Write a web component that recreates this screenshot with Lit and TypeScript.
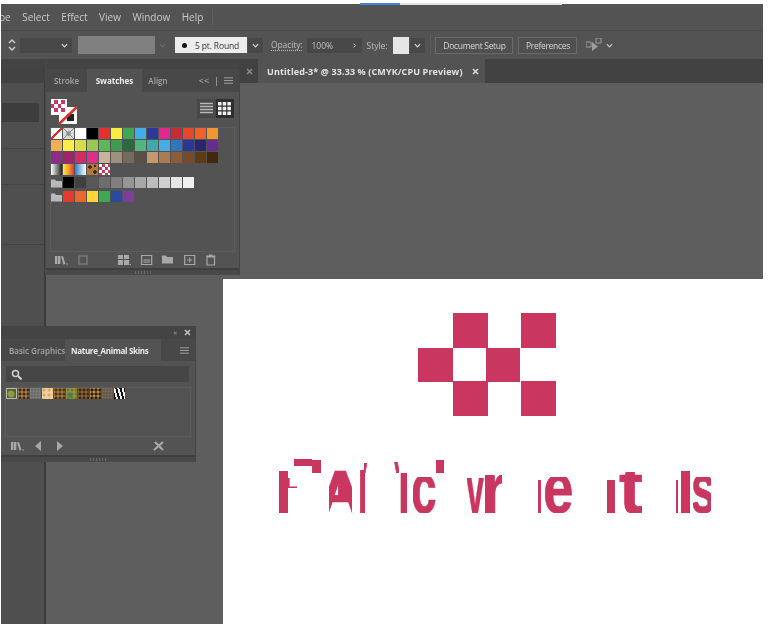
import { LitElement, html, css, svg } from "lit";
import { customElement } from "lit/decorators.js";

const ROW1 = ["none","reg","#ffffff","#000000","#e4322b","#f7ec3f","#3fa655","#43ade8","#2b3a9a","#e0298f","#c22c3b","#e5472f","#f0622b","#f2972f"];
const ROW2 = ["#f4b050","#fbee4b","#d8dc4b","#9cc653","#5cb85c","#3f9a52","#296a41","#52b47e","#41a7a7","#45ade6","#2d77c2","#2a3797","#2a2472","#652d90"];
const ROW3 = ["#8e2a90","#a0236e","#d22a6b","#de2c8f","#c4b49c","#a0907f","#756a5e","#5b4e45","#c49a6c","#a97c50","#8a5d3b","#754c29","#5f3a17","#42280e"];
const ROW4 = ["g-bw","g-yr","g-bl","leo","chk"];
const ROW5 = ["folder","#000000","#404040","#585858","#6d6d6d","#808080","#959595","#a8a8a8","#bdbdbd","#d0d0d0","#e6e6e6","#f1f1f1"];
const ROW6 = ["folder","#e53a2f","#e9672e","#fcd63a","#3fa655","#2a4a9e","#7c3f98"];
const SKINS = ["s1","s2","s3","s4","s5","s6","s7","s8","s9","s10"];

// [char, glyph x, baseline y, size, box left, top, right, bottom, horizontal scale]
const PIECES: [string, number, number, number, number, number, number, number, number?][] = [
  ["F",274,513,72,279,471,288,513],
  ["F",274,513,72,288,478,297,488],
  ["—",280,482,72,294,459,312,466],
  ["l",307,513,72,312,460,321,473],
  ["A",318,513,62,329,470,352,513],
  ["l",334,513,62,338,476,347,496],
  ["l",356,513,62,360,470,365,513],
  ["/",362,473,24,364,463,372,473],
  ["\\",393,473,24,394,462,399,473],
  ["l",396,513,72,400,473,407,513],
  ["c",411,513,72,413,477,436,513,0.64],
  ["l",431,513,72,436,460,444,473],
  ["v",466,513,72,467,478,484,513,0.46],
  ["r",480,513,72,485,475,502,513],
  ["l",533,513,72,538,480,541,513],
  ["e",543,513,72,545,477,574,513,0.76],
  ["l",602,513,72,607,480,615,513],
  ["t",619,513,72,617,472,642,513],
  ["l",671,513,72,676,480,678,513],
  ["l",676,513,72,681,471,690,513],
  ["s",691,513,72,693,477,711,513,0.6],
];

const chev = html`<svg class="chev" viewBox="0 0 8 5"><path d="M1 1l3 3 3-3" fill="none" stroke="currentColor" stroke-width="1.4"/></svg>`;
const x = html`<svg class="x" viewBox="0 0 7 7"><path d="M1 1l5 5M6 1L1 6" stroke="currentColor" stroke-width="1.5"/></svg>`;
const burger = html`<svg class="burger" viewBox="0 0 10 7"><path d="M0 .5h10M0 3.5h10M0 6.5h10" stroke="currentColor"/></svg>`;
const libs = svg`<path d="M1 2h2.400v8H1zM4 2h2.400v8H4zM7 2.400l2-.5 2.400 8.100-2 .5z" fill="currentColor"/><path d="M12.500 9.500h1.500v1h-1.500z" fill="currentColor"/>`;
const folderIcon = svg`<path d="M0 1.500h4l1 1.500h6v6.500H0z" fill="currentColor"/>`;

@customElement("app-root")
export class AppRoot extends LitElement {
  static styles = css`
    :host { display: block; position: relative; width: 768px; height: 627px; background: #fff; overflow: hidden; font-family: "Open Sans", "Noto Sans", sans-serif; }
    .topline { position: absolute; z-index: 1; left: 360px; top: 3px; width: 202px; height: 2px; background: linear-gradient(to right, #3f86d8 40px, #e4e4e4 40px); }
    .app { position: absolute; left: 1px; top: 4px; width: 762px; height: 620px; background: #5e5e5e; display: flex; flex-direction: column; filter: blur(0.45px); color: #c4c4c4; overflow: hidden; }

    .menubar { height: 26px; display: flex; align-items: center; background: #535353; font-size: 10px; color: #c9c9c9; border-bottom: 1px solid #4a4a4a; flex: none; overflow: hidden; }
    .menubar .items { display: flex; gap: 11.500px; margin-left: -2px; padding-right: 9px; border-right: 1px solid #5f5f5f; height: 16px; align-items: center; }
    .options { height: 28px; display: flex; align-items: center; background: #535353; font-size: 8.500px; flex: none; padding-left: 5px; }
    .stepper { width: 12px; height: 16px; color: #d0d0d0; flex: none; }
    .field { height: 15px; background: #484848; display: flex; align-items: center; flex: none; }
    .f1 { width: 37px; margin-left: 2px; }
    .chevbox { width: 15px; height: 15px; background: #484848; display: flex; align-items: center; justify-content: center; color: #d6d6d6; flex: none; }
    .chev { width: 7px; height: 5px; }
    .greybox { width: 77px; height: 18px; background: #808080; margin-left: 6px; flex: none; }
    .dim { background: #535353; color: #6b6b6b; }
    .stroke { width: 72px; height: 16px; margin-left: 5px; background: #ececec; color: #333; display: flex; align-items: center; font-size: 8.500px; letter-spacing: -.15px; flex: none; }
    .dot { width: 5px; height: 5px; border-radius: 50%; background: #111; margin: 0 8px 0 7px; }
    .label { flex: none; color: #bdbdbd; }
    .opacity { margin-left: 8px; border-bottom: 1px dotted #bdbdbd; line-height: 10px; letter-spacing: -.1px; }
    .f2 { width: 40px; margin-left: 5px; padding-left: 4px; box-sizing: border-box; color: #c0c0c0; font-size: 8.500px; }
    .style { margin-left: 4px; width: 27px; }
    .sw { width: 16px; height: 17px; background: #e6e6e6; flex: none; }
    .sep { width: 1px; height: 22px; background: #5d5d5d; margin: 0 4px 0 5px; flex: none; }
    .btn { height: 15px; border: 1px solid #6a6a6a; background: #505050; display: flex; align-items: center; justify-content: center; color: #d6d6d6; font-size: 8.500px; letter-spacing: -.3px; flex: none; }
    .b1 { width: 76px; }
    .b2 { width: 57px; margin-left: 5px; }
    .arr { width: 17px; height: 14px; margin-left: 9px; color: #9d9d9d; flex: none; }
    .options > .chev { margin-left: 3px; color: #c9c9c9; }

    .tabbar { height: 24px; background: #424242; display: flex; align-items: stretch; flex: none; padding-left: 245px; }
    .tabclose { width: 12px; display: flex; align-items: center; color: #8b8b8b; }
    .x { width: 7px; height: 7px; }
    .doc { width: 227px; background: #535353; display: flex; align-items: center; justify-content: space-between; padding: 0 6px 0 9px; box-sizing: border-box; font-size: 9px; font-weight: 700; color: #e2e2e2; white-space: nowrap; letter-spacing: .12px; }
    .doc .x { color: #ddd; }

    .work { flex: 1; display: flex; }
    .dock { width: 43px; background: #4f4f4f; display: flex; flex-direction: column; flex: none; border-right: 2px solid #3a3a3a; }
    .dock .cap { height: 10px; background: #434343; margin-top: -24px; }
    .dock .row { border-bottom: 1px solid #444; flex: none; }
    .dock .r1 { height: 80px; padding-top: 34px; box-sizing: border-box; }
    .dock .r1 i { display: block; height: 19px; width: 37px; margin-left: 1px; background: #3d3d3d; }
    .dock .r2 { height: 35px; }
    .dock .r3 { height: 59px; }
    .dock .r4 { height: 82px; border: 0; }

    .panel { position: absolute; background: #535353; display: flex; flex-direction: column; font-size: 8px; box-sizing: border-box; border-right: 1px solid #444; }
    .swatches { left: 44px; top: 56px; width: 195px; height: 215px; border-left: 1px solid #484848; }
    .nature { left: 0; top: 322px; width: 195px; height: 136px; }
    .strip { height: 9px; background: #444; flex: none; display: flex; justify-content: flex-end; align-items: center; gap: 7px; padding-right: 4px; }
    .nature .strip { height: 13px; }
    .tabs { height: 23px; display: flex; background: #484848; flex: none; align-items: stretch; }
    .nature .tabs { height: 22px; }
    .tab { display: flex; align-items: center; justify-content: center; color: #a5a5a5; flex: none; font-weight: 600; }
    .tab.on { background: #535353; color: #eee; font-weight: 700; }
    .tab.t1 { width: 41px; }
    .tab.t2 { width: 55px; }
    .tab.t3 { width: 32px; }
    .tab.basic { width: 64px; justify-content: flex-start; padding-left: 8px; box-sizing: border-box; white-space: nowrap; overflow: hidden; }
    .tab.animal { width: 96px; justify-content: flex-start; padding-left: 6px; box-sizing: border-box; letter-spacing: -.3px; white-space: nowrap; }
    .spacer { flex: 1; }
    .ctl { display: flex; align-items: center; gap: 5px; padding-right: 6px; color: #bbb; font-size: 9px; }
    .burger { width: 9px; height: 7px; color: #a8a8a8; }
    .body { flex: 1; display: flex; flex-direction: column; padding: 0 4px; }
    .head { display: flex; justify-content: space-between; height: 35px; width: 184px; padding: 7px 0 0 1px; box-sizing: border-box; flex: none; }
    .bigicon { width: 27px; height: 26px; }
    .views { display: flex; width: 37px; height: 19px; background: #484848; }
    .views span { width: 18.500px; height: 19px; display: flex; align-items: center; justify-content: center; }
    .views .active { background: #2f2f2f; }
    .views svg { width: 13px; height: 13px; }
    .well { flex: none; border: 1px solid #5c5c5c; box-sizing: border-box; }
    .s-well { height: 125px; width: 185px; }
    .line { display: flex; gap: 1px; height: 12px; }
    .line.g1 { margin-top: 1px; }
    .line.g2 { margin-top: 2px; }
    .cell { width: 11px; height: 11px; flex: none; }
    .none { background: linear-gradient(to top left, #fff 42%, #d92f2f 42%, #d92f2f 58%, #fff 58%); }
    .reg { background: linear-gradient(45deg, transparent 46%, #888 46% 54%, transparent 54%), linear-gradient(-45deg, transparent 46%, #888 46% 54%, transparent 54%), radial-gradient(circle, #9a9a9a 0 2px, #d8d8d8 2.500px); }
    .g-bw { background: linear-gradient(to right, #fff, #222); }
    .g-yr { background: linear-gradient(to right, #fbe94a, #f4a02f, #e0352f); }
    .g-bl { background: linear-gradient(to right, #2d7fc4, #fff); }
    .leo { background: radial-gradient(circle at 3px 3px, #3a2510 1.500px, transparent 2px), radial-gradient(circle at 8px 8px, #3a2510 1.500px, transparent 2px), radial-gradient(circle at 8px 2px, #3a2510 1px, transparent 1.500px), #b27a36; }
    .chk { background: conic-gradient(#cb3860 25%, #fff 0 50%, #cb3860 0 75%, #fff 0) 0 0 / 6px 6px; }
    .folder { color: #b9b9b9; display: flex; align-items: center; }
    .folder svg { width: 11px; height: 10px; }
    .foot { display: flex; align-items: center; color: #a8a8a8; flex: none; }
    .foot svg { flex: none; }
    .s-foot { height: 16px; padding-left: 4px; }
    .grip { height: 7px; background: #494949; border-top: 2px solid #3f3f3f; box-sizing: border-box; flex: none; display: flex; justify-content: center; }
    .grip i { width: 16px; height: 3px; margin-top: 1px; background: repeating-linear-gradient(to right, #6b6b6b 0 1px, transparent 1px 3px); }
    .search { height: 16px; background: #464646; margin: 5px 0 0 1px; width: 183px; display: flex; align-items: center; padding-left: 5px; box-sizing: border-box; color: #cfcfcf; flex: none; }
    .search svg { width: 11px; height: 11px; }
    .n-well { height: 50px; margin-top: 5px; padding: 0; width: 186px; }
    .n-line { display: flex; gap: 1px; }
    .skin { width: 11px; height: 11px; flex: none; }
    .s1 { background: radial-gradient(circle at 5px 6px, #8a9a45 3px, #55652c 4px); outline: 1px solid #b8b8b8; outline-offset: -1px; }
    .s2 { background: radial-gradient(circle at 2px 2px, #3f2a16 1px, transparent 2px) 0 0 / 4px 4px, #a97b47; }
    .s3 { background: radial-gradient(circle at 2px 2px, #6b6b6b 1px, transparent 2px) 0 0 / 3px 3px, #7f7f7f; }
    .s4 { background: radial-gradient(circle at 2px 2px, #dba866 1px, transparent 2px) 0 0 / 5px 5px, #f0d09a; }
    .s5 { background: radial-gradient(circle at 2px 2px, #4a3218 1px, transparent 2px) 0 0 / 4px 4px, #a07a40; }
    .s6 { background: radial-gradient(circle at 4px 7px, #3d7f6a 2px, transparent 3px), radial-gradient(circle at 2px 2px, #6d7a30 1px, transparent 2px) 0 0 / 4px 4px, #a5903f; }
    .s7 { background: radial-gradient(circle at 2px 2px, #3c2615 1px, transparent 2px) 0 0 / 4px 4px, #8a6238; }
    .s8 { background: radial-gradient(circle at 2px 2px, #2e1e0f 1.200px, transparent 2px) 0 0 / 4px 4px, #c08a3c; }
    .s9 { background: radial-gradient(circle at 2px 2px, #65584a 1px, transparent 2px) 0 0 / 3px 3px, #7a6d5e; }
    .s10 { background: repeating-linear-gradient(75deg, #111 0 2px, #eee 2px 4px); }
    .n-foot { height: 18px; padding-left: 5px; }

    .artboard { position: absolute; left: 222px; top: 275px; right: 0; bottom: 0; background: #fff; }
    .logo { position: absolute; left: 195px; top: 34px; width: 139px; height: 104px; }
    .piece { position: absolute; overflow: hidden; color: #c9365f; font-family: "Liberation Sans", Arial, sans-serif; font-weight: 700; }
    .piece span { position: absolute; line-height: 1; white-space: pre; transform-origin: 0 50%; -webkit-text-stroke: .7px #c9365f; }
  `;

  private cell(v: string) {
    if (v === "folder") return html`<div class="cell folder"><svg viewBox="0 0 11 10">${folderIcon}</svg></div>`;
    if (v.startsWith("#")) return html`<div class="cell" style="background:${v}"></div>`;
    return html`<div class="cell ${v}"></div>`;
  }

  private row(list: string[], gap = "") {
    return html`<div class="line ${gap}">${list.map((v) => this.cell(v))}</div>`;
  }

  private foot(icon: unknown, w: number, ml: number, o = 1) {
    return html`<svg viewBox="0 0 ${w} 12" width=${w} height="12" style="margin-left:${ml}px;opacity:${o}">${icon}</svg>`;
  }

  render() {
    return html`
      <div class="topline"></div>
      <div class="app">
        <div class="menubar">
          <div class="items"><span>pe</span><span>Select</span><span>Effect</span><span>View</span><span>Window</span><span>Help</span></div>
        </div>
        <div class="options">
          <svg class="stepper" viewBox="0 0 12 16"><path d="M3 6l3-3 3 3M3 10l3 3 3-3" fill="none" stroke="currentColor" stroke-width="1.400"/></svg>
          <div class="field f1"></div>
          <div class="chevbox">${chev}</div>
          <div class="greybox"></div>
          <div class="chevbox dim">${chev}</div>
          <div class="stroke"><span class="dot"></span>5 pt. Round</div>
          <div class="chevbox" style="margin-left:1px">${chev}</div>
          <span class="label opacity">Opacity:</span>
          <div class="field f2">100%</div>
          <div class="chevbox">
            <svg class="chev" viewBox="0 0 8 8"><path d="M2.500 1l3 3-3 3" fill="none" stroke="currentColor" stroke-width="1.400"/></svg>
          </div>
          <span class="label style">Style:</span>
          <div class="sw"></div>
          <div class="chevbox" style="margin-left:1px">${chev}</div>
          <div class="sep"></div>
          <div class="btn b1">Document Setup</div>
          <div class="btn b2">Preferences</div>
          <svg class="arr" viewBox="0 0 17 14"><path d="M0 4h5v5H0zM10 0h5v5h-5z" fill="none" stroke="currentColor"/><path d="M6 4l6 4.500-6 4.500z" fill="currentColor"/></svg>
          ${chev}
        </div>
        <div class="tabbar">
          <div class="tabclose">${x}</div>
          <div class="doc"><span>Untitled-3* @ 33.33 % (CMYK/CPU Preview)</span>${x}</div>
        </div>
        <div class="work">
          <div class="dock">
            <div class="cap"></div>
            <div class="row r1"><i></i></div>
            <div class="row r2"></div>
            <div class="row r3"></div>
            <div class="row r4"></div>
          </div>
        </div>

        <div class="artboard">
          <svg class="logo" viewBox="0 0 139 104" fill="#c9365f">
            <path d="M35 0h35v35H35zM103 0h35v35h-35zM0 35h35v34H0zM68 35h34v34H68zM35 68h35v35H35zM103 68h35v35h-35z"/>
          </svg>
          ${PIECES.map(([ch, gx, base, size, l, t, r, b, sx]) => html`
            <div class="piece" style="left:${l - 223}px;top:${t - 279}px;width:${r - l}px;height:${b - t}px;font-size:${size}px">
              <span style="left:${gx - l}px;top:${base - 0.8465 * size - t}px;transform:scaleX(${sx ?? 1})">${ch}</span>
            </div>`)}
        </div>

        <div class="panel swatches">
          <div class="strip"></div>
          <div class="tabs">
            <div class="tab t1">Stroke</div>
            <div class="tab on t2">Swatches</div>
            <div class="tab t3">Align</div>
            <div class="spacer"></div>
            <div class="ctl"><span>&lt;&lt;</span><span>|</span>${burger}</div>
          </div>
          <div class="body">
            <div class="head">
              <svg class="bigicon" viewBox="0 0 27 26">
                <rect x="8" y="8" width="18" height="17" fill="#fff"/>
                <rect x="16" y="15" width="7" height="7" fill="#222"/>
                <path d="M8 25L26 8" stroke="#e0302c" stroke-width="2.500"/>
                <rect x="0" y="0" width="16" height="16" fill="#fff"/>
                <path d="M3 1h4v4H3zM10 1h4v4h-4zM0 5h3v4H0zM7 5h3v4H7zM3 9h4v4H3zM10 9h4v4h-4z" fill="#cb3860"/>
              </svg>
              <div class="views">
                <span><svg viewBox="0 0 13 13"><path d="M0 1.500h13M0 4.500h13M0 7.500h13M0 10.500h13" stroke="#b9b9b9" stroke-width="1.600"/></svg></span>
                <span class="active"><svg viewBox="0 0 13 13"><path d="M0 0h3.500v3.500H0zM4.700 0h3.500v3.500H4.700zM9.400 0h3.500v3.500H9.400zM0 4.700h3.500v3.500H0zM4.700 4.700h3.500v3.500H4.700zM9.400 4.700h3.500v3.500H9.400zM0 9.400h3.500v3.500H0zM4.700 9.400h3.500v3.500H4.700zM9.400 9.400h3.500v3.500H9.400z" fill="#f2f2f2"/></svg></span>
              </div>
            </div>
            <div class="well s-well">
              ${this.row(ROW1)}${this.row(ROW2)}${this.row(ROW3)}${this.row(ROW4)}${this.row(ROW5, "g1")}${this.row(ROW6, "g2")}
            </div>
            <div class="foot s-foot">
              ${this.foot(libs, 14, 0)}
              ${this.foot(svg`<path d="M2 2h8v8H2z" fill="none" stroke="currentColor" stroke-width="1.500"/>`, 12, 9, 0.45)}
              ${this.foot(svg`<path d="M0 1h5v4H0zM6 1h5v4H6zM0 6h5v5H0zM6 6h5v5H6z" fill="currentColor"/><path d="M11.500 10h1.500v1h-1.500z" fill="currentColor"/>`, 13, 29)}
              ${this.foot(svg`<path d="M.7 1.500h10v9h-10z" fill="none" stroke="currentColor" stroke-width="1.200"/><path d="M2.500 5h6.500v4H2.500z" fill="currentColor" opacity=".5"/>`, 12, 9.500)}
              ${this.foot(folderIcon, 12, 9.500)}
              ${this.foot(svg`<path d="M.7 1.500h10v9h-10z" fill="none" stroke="currentColor" stroke-width="1.200"/><path d="M5.700 3.500v5M3.200 6h5" stroke="currentColor"/>`, 12, 9.500)}
              ${this.foot(svg`<path d="M2 3h7.500v8H2zM1 2h9.500M4 1h3.500" fill="none" stroke="currentColor" stroke-width="1.200"/>`, 12, 9.500)}
            </div>
          </div>
          <div class="grip"><i></i></div>
        </div>

        <div class="panel nature">
          <div class="strip"><span style="font-size:7px;color:#aaa">«</span>${x}</div>
          <div class="tabs">
            <div class="tab basic">Basic Graphics</div>
            <div class="tab on animal">Nature_Animal Skins</div>
            <div class="spacer"></div>
            <div class="ctl">${burger}</div>
          </div>
          <div class="body">
            <div class="search"><svg viewBox="0 0 11 11"><circle cx="4.500" cy="4.500" r="3" fill="none" stroke="currentColor" stroke-width="1.500"/><path d="M7 7l3.500 3.500" stroke="currentColor" stroke-width="2"/></svg></div>
            <div class="well n-well">
              <div class="n-line">${SKINS.map((s) => html`<div class="skin ${s}"></div>`)}</div>
            </div>
            <div class="foot n-foot">
              ${this.foot(libs, 14, 0)}
              ${this.foot(svg`<path d="M6 1v10L0 6z" fill="currentColor"/>`, 7, 11)}
              ${this.foot(svg`<path d="M1 1v10l6-5z" fill="currentColor"/>`, 7, 14)}
              ${this.foot(svg`<path d="M1 10L10 2M2 2l8 8" stroke="currentColor" stroke-width="2.200"/>`, 12, 90)}
            </div>
          </div>
          <div class="grip"><i></i></div>
        </div>
      </div>
    `;
  }
}
